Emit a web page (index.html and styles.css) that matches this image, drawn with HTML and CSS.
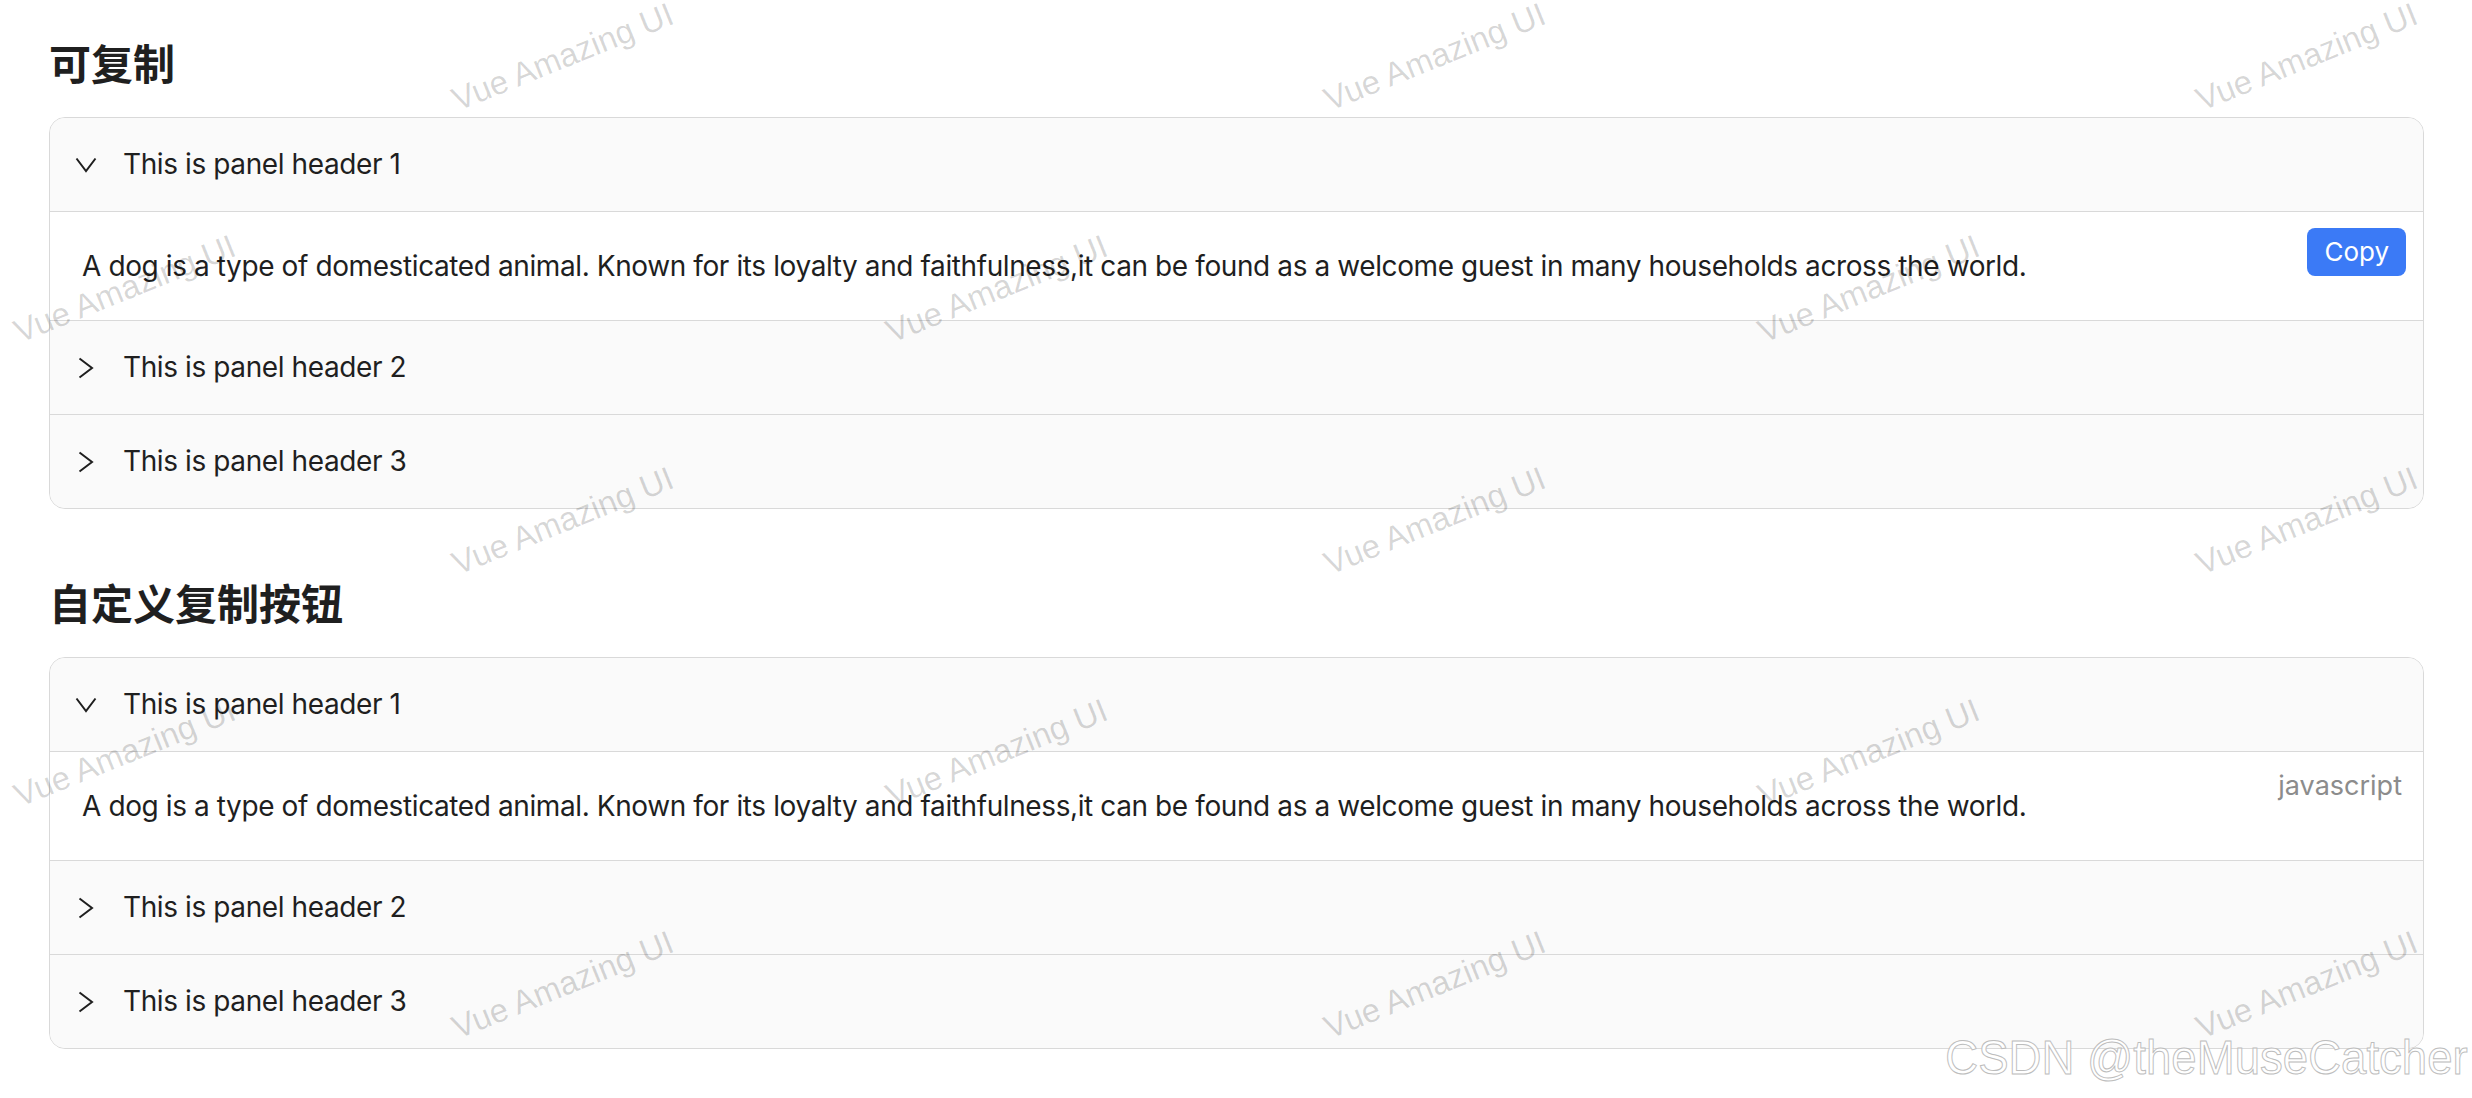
FILE: index.html
```html
<!DOCTYPE html>
<html lang="zh-CN">
<head>
    <meta charset="UTF-8">
    <meta name="viewport" content="width=device-width, initial-scale=1.0">
    <title>Collapse Copy</title>
    <link rel="stylesheet" href="styles.css">
</head>
<body>
    <div class="page">
        <section class="demo">
            <h2 class="demo-title">可复制</h2>
            <div class="collapse">
                <div class="collapse-item">
                    <div class="collapse-header">
                        <svg class="arrow" viewBox="0 0 22 22"><polyline points="1.5,4.5 11,17 20.5,4.5"/></svg>
                        <span>This is panel header 1</span>
                    </div>
                    <div class="collapse-content">
                        <p>A dog is a type of domesticated animal. Known for its loyalty and faithfulness,it can be found as a welcome guest in many households across the world.</p>
                        <button class="copy-btn">Copy</button>
                    </div>
                </div>
                <div class="collapse-item">
                    <div class="collapse-header">
                        <svg class="arrow" viewBox="0 0 22 22"><polyline points="4.5,1.5 17,11 4.5,20.5"/></svg>
                        <span>This is panel header 2</span>
                    </div>
                </div>
                <div class="collapse-item">
                    <div class="collapse-header">
                        <svg class="arrow" viewBox="0 0 22 22"><polyline points="4.5,1.5 17,11 4.5,20.5"/></svg>
                        <span>This is panel header 3</span>
                    </div>
                </div>
            </div>
        </section>

        <section class="demo">
            <h2 class="demo-title">自定义复制按钮</h2>
            <div class="collapse">
                <div class="collapse-item">
                    <div class="collapse-header">
                        <svg class="arrow" viewBox="0 0 22 22"><polyline points="1.5,4.5 11,17 20.5,4.5"/></svg>
                        <span>This is panel header 1</span>
                    </div>
                    <div class="collapse-content">
                        <p>A dog is a type of domesticated animal. Known for its loyalty and faithfulness,it can be found as a welcome guest in many households across the world.</p>
                        <span class="lang-tag">javascript</span>
                    </div>
                </div>
                <div class="collapse-item">
                    <div class="collapse-header">
                        <svg class="arrow" viewBox="0 0 22 22"><polyline points="4.5,1.5 17,11 4.5,20.5"/></svg>
                        <span>This is panel header 2</span>
                    </div>
                </div>
                <div class="collapse-item">
                    <div class="collapse-header">
                        <svg class="arrow" viewBox="0 0 22 22"><polyline points="4.5,1.5 17,11 4.5,20.5"/></svg>
                        <span>This is panel header 3</span>
                    </div>
                </div>
            </div>
        </section>

        <!-- watermark layer -->
        <div class="watermark">
            <div class="wm-row">
                <div class="wm-cell"><span>Vue Amazing UI</span></div>
                <div class="wm-cell"><span>Vue Amazing UI</span></div>
                <div class="wm-cell"><span>Vue Amazing UI</span></div>
            </div>
            <div class="wm-row shifted">
                <div class="wm-cell"><span>Vue Amazing UI</span></div>
                <div class="wm-cell"><span>Vue Amazing UI</span></div>
                <div class="wm-cell"><span>Vue Amazing UI</span></div>
            </div>
            <div class="wm-row">
                <div class="wm-cell"><span>Vue Amazing UI</span></div>
                <div class="wm-cell"><span>Vue Amazing UI</span></div>
                <div class="wm-cell"><span>Vue Amazing UI</span></div>
            </div>
            <div class="wm-row shifted">
                <div class="wm-cell"><span>Vue Amazing UI</span></div>
                <div class="wm-cell"><span>Vue Amazing UI</span></div>
                <div class="wm-cell"><span>Vue Amazing UI</span></div>
            </div>
            <div class="wm-row">
                <div class="wm-cell"><span>Vue Amazing UI</span></div>
                <div class="wm-cell"><span>Vue Amazing UI</span></div>
                <div class="wm-cell"><span>Vue Amazing UI</span></div>
            </div>
        </div>

        <div class="csdn-mark">CSDN @theMuseCatcher</div>
    </div>
</body>
</html>
```

FILE: styles.css
```css
* {
    margin: 0;
    padding: 0;
    box-sizing: border-box;
}

body {
    font-family: Inter, "Noto Sans CJK SC", sans-serif;
    color: #1f1f1f;
    background-color: #ffffff;
    overflow: hidden;
}

.page {
    position: relative;
    height: 1098px;
    padding: 34px 48px 0 49px;
    overflow: hidden;
}

.demo + .demo {
    margin-top: 65px;
}

.demo-title {
    font-family: "Noto Sans CJK SC", sans-serif;
    font-size: 42px;
    font-weight: 700;
    line-height: 56px;
    color: #1f1f1f;
    margin-bottom: 27px;
}

.collapse {
    border: 1px solid #d9d9d9;
    border-radius: 16px;
    overflow: hidden;
    background-color: #fafafa;
}

.collapse-item + .collapse-item {
    border-top: 1px solid #d9d9d9;
}

.collapse-header {
    display: flex;
    align-items: center;
    gap: 26px;
    padding: 24px 32px 24px 25px;
    font-size: 28px;
    line-height: 45px;
    letter-spacing: -0.4px;
    background-color: #fafafa;
}

.arrow {
    width: 22px;
    height: 22px;
    flex-shrink: 0;
    fill: none;
    stroke: #1f1f1f;
    stroke-width: 2;
}

.collapse-content {
    position: relative;
    border-top: 1px solid #d9d9d9;
    background-color: #ffffff;
    padding: 32px;
    font-size: 28px;
    line-height: 44px;
}

.collapse-content p {
    letter-spacing: -0.4px;
}

.copy-btn {
    position: absolute;
    top: 16px;
    right: 17px;
    height: 48px;
    padding: 0 17px;
    font-family: Inter, sans-serif;
    font-size: 26px;
    line-height: 48px;
    color: #ffffff;
    background-color: #3b7af6;
    border: none;
    border-radius: 8px;
    cursor: pointer;
}

.lang-tag {
    position: absolute;
    top: 12px;
    right: 21px;
    font-size: 27px;
    line-height: 44px;
    color: #8c8c8c;
}

.watermark {
    position: absolute;
    top: -59px;
    left: 0;
    right: 0;
    pointer-events: none;
    z-index: 10;
}

.wm-row {
    display: flex;
    height: 232px;
    padding-left: 127px;
}

.wm-row.shifted {
    padding-left: 0;
    margin-left: -311px;
}

.wm-cell {
    flex: 0 0 872px;
    display: flex;
    align-items: center;
    justify-content: center;
}

.wm-cell span {
    font-family: "Liberation Sans", Arial, sans-serif;
    font-size: 33px;
    line-height: 36px;
    color: rgba(0, 0, 0, 0.16);
    white-space: nowrap;
    transform: rotate(-22deg);
}

.csdn-mark {
    position: absolute;
    top: 1033px;
    right: 4px;
    font-family: "Liberation Sans", Arial, sans-serif;
    font-size: 49px;
    line-height: 49px;
    white-space: nowrap;
    color: #ffffff;
    -webkit-text-stroke: 1px #bdbdbd;
    transform: scaleX(0.93);
    transform-origin: right center;
    z-index: 11;
}
```
